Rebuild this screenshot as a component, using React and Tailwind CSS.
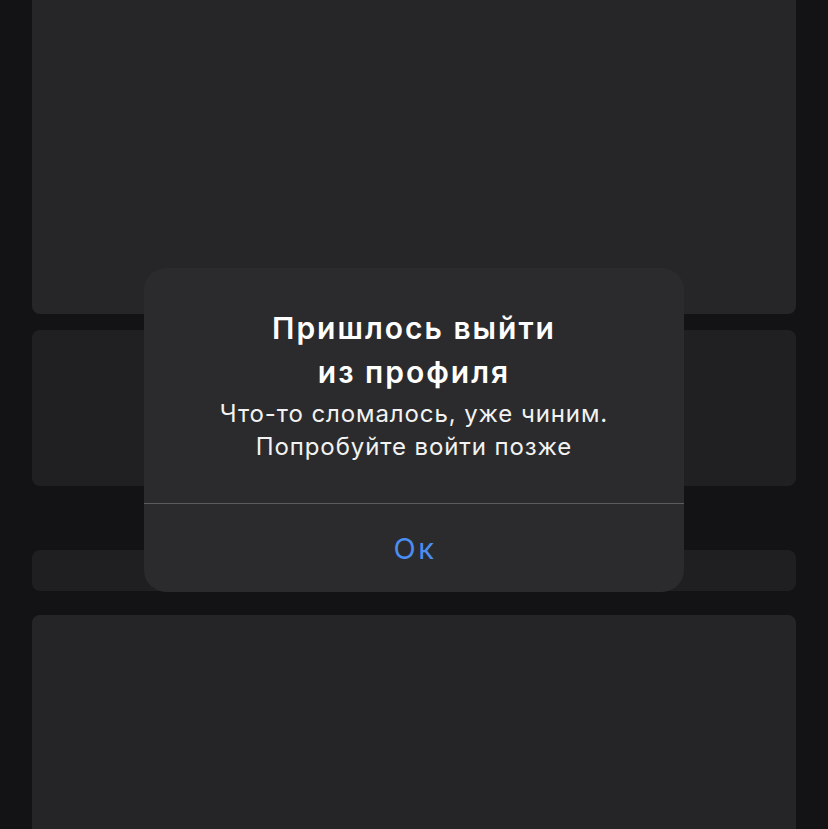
import React from "react";

export default function App() {
  return (
    <div className="relative w-[828px] h-[829px] overflow-hidden bg-[#131315]" style={{ fontFamily: "Inter, 'Noto Sans', sans-serif" }}>
      <div className="flex flex-col px-[32px]">
        <div className="h-[314px] rounded-b-[8px] bg-[#262628]" />
        <div className="mt-[16px] h-[156px] rounded-[8px] bg-[#202022]" />
        <div className="mt-[64px] h-[41px] rounded-[8px] bg-[#1f1f21]" />
        <div className="mt-[24px] h-[240px] rounded-t-[8px] bg-[#252527]" />
      </div>

      <div className="absolute left-[144px] top-[268px] w-[540px] h-[324px] rounded-[22px] bg-[#2b2b2d] flex flex-col">
        <div className="flex flex-col items-center text-center pt-[38px] pb-[40px] border-b border-[#5c5c5e]">
          <div className="text-[30px] leading-[44px] font-semibold text-white tracking-[2px]">
            Пришлось выйти
            <br />
            из профиля
          </div>
          <div className="mt-[3px] text-[24px] leading-[33px] text-[#f2f2f2] tracking-[0.9px]">
            Что-то сломалось, уже чиним.
            <br />
            Попробуйте войти позже
          </div>
        </div>
        <div className="flex-1 flex items-center justify-center">
          <span className="pl-[2px] text-[29px] leading-none text-[#4a8ef2] tracking-[2.5px]">Ок</span>
        </div>
      </div>
    </div>
  );
}
